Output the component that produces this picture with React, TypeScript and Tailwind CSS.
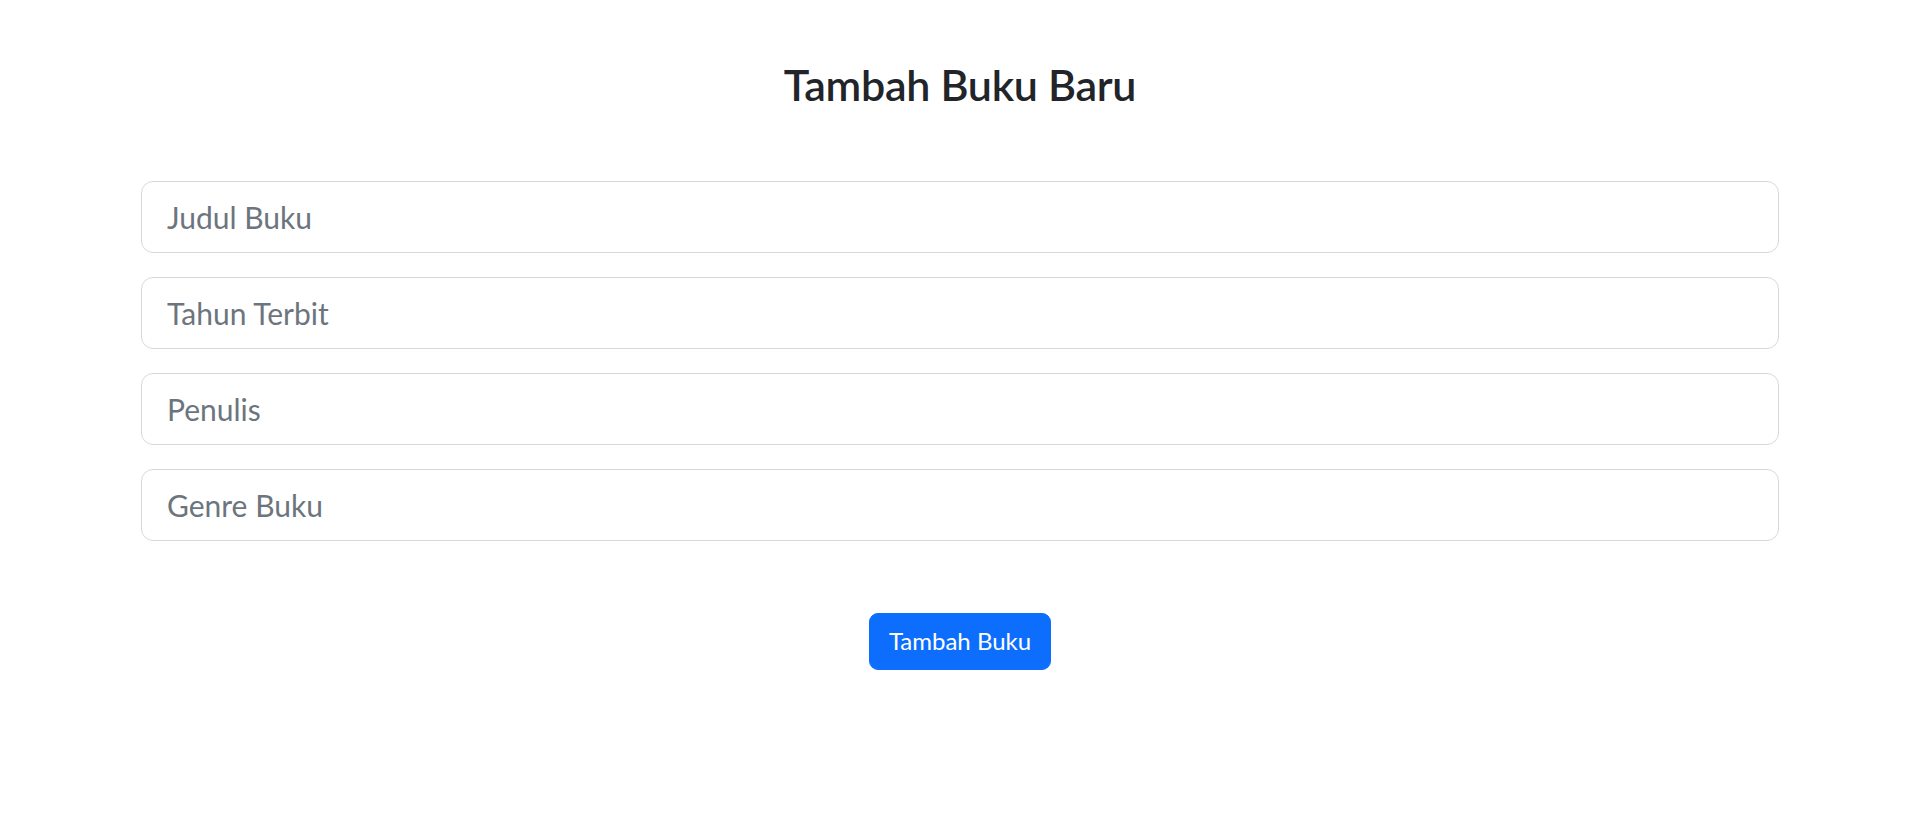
import React from "react";

export default function App() {
  const fields = ["Judul Buku", "Tahun Terbit", "Penulis", "Genre Buku"];
  return (
    <div className="min-h-[823px] bg-white font-['Lato',sans-serif] text-[#212529]">
      <div className="w-[1638px] mx-auto pt-[56px]">
        <h2 className="text-center text-[43px] font-semibold tracking-[-0.3px] leading-[57.6px] mb-[67px]">
          Tambah Buku Baru
        </h2>
        <form className="flex flex-col gap-[24px]" onSubmit={(e) => e.preventDefault()}>
          {fields.map((f) => (
            <input
              key={f}
              type="text"
              placeholder={f}
              className="h-[72px] w-full border border-[#d5d9de] rounded-[12px] px-[25px] text-[30px] text-[#212529] placeholder:text-[#6c757d] outline-none bg-white"
            />
          ))}
          <div className="flex justify-center mt-[48px]">
            <button
              type="submit"
              className="h-[57px] w-[182px] rounded-[9px] bg-[#0d6efd] text-white text-[24px] leading-[36px] border border-[#0d6efd]"
            >
              Tambah Buku
            </button>
          </div>
        </form>
      </div>
    </div>
  );
}
